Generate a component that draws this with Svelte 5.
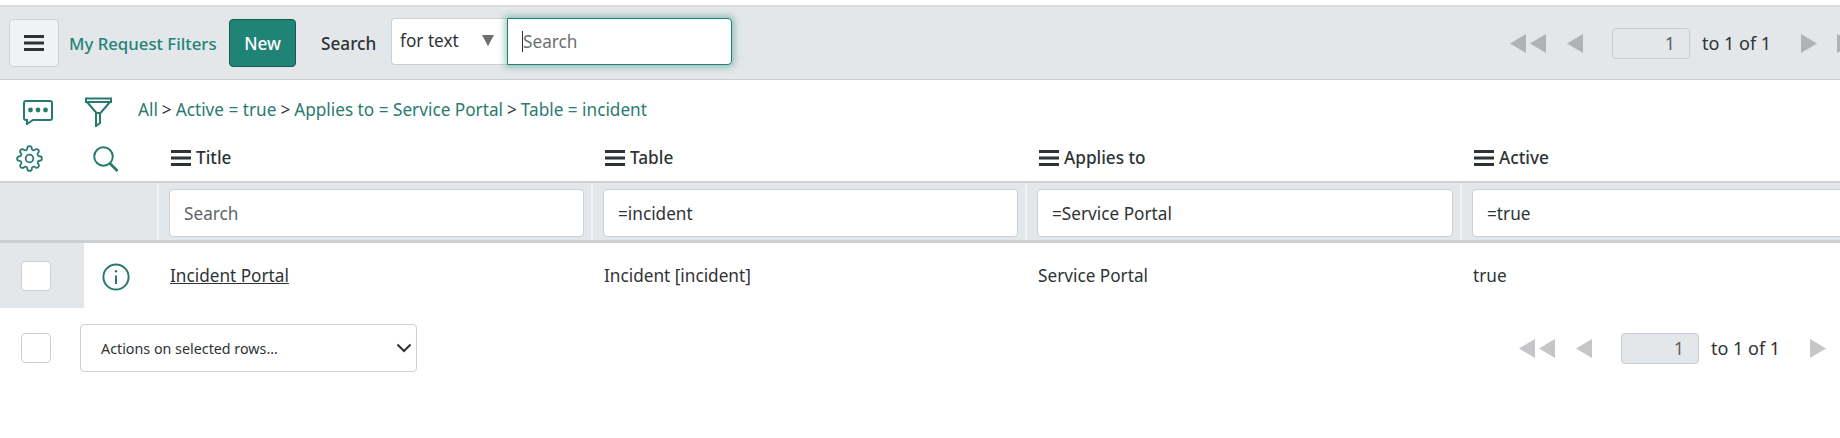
<script>
  const columns = [
    { title: 'Title', filter: '' },
    { title: 'Table', filter: '=incident' },
    { title: 'Applies to', filter: '=Service Portal' },
    { title: 'Active', filter: '=true' }
  ];

  const crumbs = ['All', 'Active = true', 'Applies to = Service Portal', 'Table = incident'];
</script>

{#snippet menuIcon(cls)}
  <svg class={cls} viewBox="0 0 20 16" aria-hidden="true">
    <rect x="0" y="0" width="20" height="3" />
    <rect x="0" y="6.5" width="20" height="3" />
    <rect x="0" y="13" width="20" height="3" />
  </svg>
{/snippet}

{#snippet pager(cls)}
  <div class="pager {cls}">
    <svg class="pg-first" viewBox="0 0 36 19" aria-hidden="true">
      <polygon points="0,9.5 16,0 16,19" />
      <polygon points="20,9.5 36,0 36,19" />
    </svg>
    <svg class="pg-one" viewBox="0 0 16 19" aria-hidden="true">
      <polygon points="0,9.5 16,0 16,19" />
    </svg>
    <div class="pg-input">1</div>
    <span class="pg-text">to 1 of 1</span>
    <svg class="pg-next" viewBox="0 0 16 19" aria-hidden="true">
      <polygon points="16,9.5 0,0 0,19" />
    </svg>
    <svg class="pg-last" viewBox="0 0 36 19" aria-hidden="true">
      <polygon points="20,9.5 0,0 0,19" />
      <polygon points="36,9.5 20,0 20,19" />
    </svg>
  </div>
{/snippet}

<div class="page">
  <header class="toolbar">
    <button class="nav-btn">{@render menuIcon('menu-dark')}</button>
    <span class="list-title">My Request Filters</span>
    <button class="new-btn">New</button>
    <span class="search-label">Search</span>
    <div class="search-group">
      <div class="search-type">
        <span>for text</span>
        <svg viewBox="0 0 12 12" aria-hidden="true"><polygon points="0,1 12,1 6,12" /></svg>
      </div>
      <div class="search-input"><i class="caret"></i><span>Search</span></div>
    </div>
    {@render pager('pager-top')}
  </header>

  <div class="crumb-row">
    <svg class="comment-icon" viewBox="0 0 30 25" aria-hidden="true">
      <path d="M3 1h24a2 2 0 0 1 2 2v15a2 2 0 0 1-2 2H10l-6 4v-4H3a2 2 0 0 1-2-2V3a2 2 0 0 1 2-2z" />
      <circle cx="7.5" cy="10" r="2.4" class="dot" />
      <circle cx="15" cy="10" r="2.4" class="dot" />
      <circle cx="22.5" cy="10" r="2.4" class="dot" />
    </svg>
    <svg class="funnel-icon" viewBox="0 0 27 30" aria-hidden="true">
      <path d="M1 1.5h25v3.5H1zM2 5l9.5 11h4L25 5M11 16v13l4-3V16" />
    </svg>
    <nav class="crumbs">
      {#each crumbs as crumb, i}
        {#if i > 0}<span class="sep">&gt;</span>{/if}
        <span>{crumb}</span>
      {/each}
    </nav>
  </div>

  <div class="table">
    <div class="head-cell icon-cell">
      <svg class="gear-icon" viewBox="0 0 24 24" aria-hidden="true">
        <circle cx="12" cy="12" r="3.4" />
        <path d="M19.4 15a1.65 1.65 0 0 0 .33 1.82l.06.06a2 2 0 0 1 0 2.83 2 2 0 0 1-2.83 0l-.06-.06a1.65 1.65 0 0 0-1.82-.33 1.65 1.65 0 0 0-1 1.51V21a2 2 0 0 1-2 2 2 2 0 0 1-2-2v-.09A1.65 1.65 0 0 0 9 19.4a1.65 1.65 0 0 0-1.82.33l-.06.06a2 2 0 0 1-2.83 0 2 2 0 0 1 0-2.83l.06-.06a1.65 1.65 0 0 0 .33-1.82 1.65 1.65 0 0 0-1.51-1H3a2 2 0 0 1-2-2 2 2 0 0 1 2-2h.09A1.65 1.65 0 0 0 4.6 9a1.65 1.65 0 0 0-.33-1.82l-.06-.06a2 2 0 0 1 0-2.83 2 2 0 0 1 2.83 0l.06.06a1.65 1.65 0 0 0 1.82.33H9a1.65 1.65 0 0 0 1-1.51V3a2 2 0 0 1 2-2 2 2 0 0 1 2 2v.09a1.65 1.65 0 0 0 1 1.51 1.65 1.65 0 0 0 1.82-.33l.06-.06a2 2 0 0 1 2.83 0 2 2 0 0 1 0 2.83l-.06.06a1.65 1.65 0 0 0-.33 1.82V9a1.65 1.65 0 0 0 1.51 1H21a2 2 0 0 1 2 2 2 2 0 0 1-2 2h-.09a1.65 1.65 0 0 0-1.51 1z" />
      </svg>
    </div>
    <div class="head-cell icon-cell">
      <svg class="find-icon" viewBox="0 0 26 26" aria-hidden="true">
        <circle cx="10.5" cy="10.5" r="9.3" />
        <path d="M17 17.5l7.5 7.5" class="handle" />
      </svg>
    </div>
    {#each columns as col}
      <div class="head-cell">
        {@render menuIcon('menu-col')}
        <span class="col-title">{col.title}</span>
      </div>
    {/each}

    <div class="filter-cell filter-blank"></div>
    {#each columns as col}
      <div class="filter-cell">
        <div class="filter-input" class:placeholder={!col.filter}>{col.filter || 'Search'}</div>
      </div>
    {/each}

    <div class="row-check"><span class="checkbox"></span></div>
    <div class="row-cell row-info">
      <svg class="info-icon" viewBox="0 0 28 28" aria-hidden="true">
        <circle cx="14" cy="14" r="12.6" />
        <path d="M14 12.5v8.5" />
        <circle cx="14" cy="8.3" r="1.2" class="dot" />
      </svg>
    </div>
    <div class="row-cell"><a href="#incident" class="row-link">Incident Portal</a></div>
    <div class="row-cell"><span>Incident [incident]</span></div>
    <div class="row-cell"><span>Service Portal</span></div>
    <div class="row-cell"><span>true</span></div>
  </div>

  <footer class="list-footer">
    <span class="checkbox"></span>
    <div class="actions">
      <span>Actions on selected rows...</span>
      <svg viewBox="0 0 16 10" aria-hidden="true"><path d="M1.5 1.5L8 8l6.5-6.5" /></svg>
    </div>
    {@render pager('pager-bottom')}
  </footer>
</div>

<style>
  :global(body) {
    margin: 0;
    background: #fff;
    overflow: hidden;
  }

  .page {
    width: 1900px;
    padding-top: 5px;
    font-family: "Noto Sans", Roboto, sans-serif;
    font-size: 17.2px;
    color: #2e3336;
  }

  svg {
    display: block;
    flex-shrink: 0;
  }

  .toolbar {
    height: 72px;
    display: flex;
    align-items: center;
    background: #e4e7ea;
    border-top: 2px solid #d9dcde;
    border-bottom: 1px solid #cbced0;
    padding-left: 9px;
  }

  .nav-btn {
    width: 50px;
    height: 48px;
    padding: 0;
    display: flex;
    align-items: center;
    justify-content: center;
    background: #f1f2f4;
    border: 1px solid #cdd0d3;
    border-radius: 4px;
  }

  .menu-dark {
    width: 20px;
    height: 16px;
    fill: #2e3336;
  }

  .list-title {
    margin-left: 10px;
    font-size: 16.8px;
    font-weight: 500;
    color: #1f8476;
    width: 160px;
    white-space: nowrap;
  }

  .new-btn {
    width: 67px;
    height: 48px;
    padding: 0;
    font: inherit;
    font-weight: 500;
    color: #fff;
    background: #1f8476;
    border: 1px solid #17594f;
    border-radius: 4px;
  }

  .search-label {
    margin-left: 25px;
    width: 70px;
    font-weight: 500;
  }

  .search-group {
    display: flex;
    height: 47px;
    margin-top: -3px;
  }

  .search-type {
    width: 116px;
    box-sizing: border-box;
    padding: 0 0 3px 8px;
    display: flex;
    align-items: center;
    justify-content: space-between;
    background: #fff;
    border: 1px solid #cdd0d3;
    border-right: 0;
    border-radius: 4px 0 0 4px;
  }

  .search-type svg {
    width: 12px;
    height: 12px;
    margin-right: 13px;
    fill: #6b6f72;
  }

  .search-input {
    width: 225px;
    box-sizing: border-box;
    padding-left: 14px;
    display: flex;
    align-items: center;
    color: #6b7073;
    background: #fff;
    border: 1px solid #1f8476;
    border-radius: 0 4px 4px 0;
    box-shadow: 0 0 7px 2px rgba(31, 132, 118, 0.45);
  }

  .caret {
    width: 1px;
    height: 21px;
    background: #2e3336;
  }

  .pager {
    display: flex;
    align-items: center;
  }

  .pg-first,
  .pg-last {
    width: 36px;
    height: 19px;
  }

  .pg-one,
  .pg-next {
    width: 16px;
    height: 19px;
  }

  .pg-one {
    margin-left: 21px;
  }

  .pg-input {
    width: 78px;
    height: 31px;
    box-sizing: border-box;
    margin-left: 29px;
    padding-right: 14px;
    text-align: right;
    line-height: 29px;
    font-size: 18px;
    color: #5b6266;
    border: 1px solid #c8ccd0;
    border-radius: 4px;
    background: #e4e7ea;
  }

  .pg-text {
    width: 111px;
    padding-left: 12px;
    box-sizing: border-box;
    font-size: 18px;
    white-space: nowrap;
  }

  .pg-last {
    margin-left: 20px;
  }

  .pager-top {
    margin-left: auto;
    padding-right: 27px;
    fill: #b0b3b6;
  }

  .pager-bottom {
    margin-left: auto;
    fill: #c4c6c8;
  }

  .crumb-row {
    height: 44px;
    padding-top: 10px;
    display: flex;
    align-items: center;
    padding-left: 23px;
  }

  .comment-icon {
    width: 30px;
    height: 25px;
    fill: none;
    stroke: #297a6e;
    stroke-width: 2;
  }

  .dot {
    fill: currentColor;
    stroke: none;
  }

  .comment-icon,
  .info-icon {
    color: #297a6e;
  }

  .funnel-icon {
    width: 27px;
    height: 30px;
    margin-left: 32px;
    fill: none;
    stroke: #297a6e;
    stroke-width: 2;
  }

  .crumbs {
    margin-left: 26px;
    margin-top: -6px;
    display: flex;
    gap: 4px;
    color: #2b7a6e;
    white-space: nowrap;
  }

  .sep {
    color: #2e3336;
  }

  .table {
    display: grid;
    grid-template-columns: 84px 73px 434px 434px 435px 440px;
  }

  .head-cell {
    display: flex;
    align-items: center;
    padding-left: 14px;
    border-bottom: 2px solid #cdd0d2;
    height: 47px;
    gap: 5px;
    font-weight: 500;
  }

  .head-cell:nth-child(1) {
    padding-left: 16px;
  }

  .head-cell:nth-child(2) {
    padding-left: 9px;
  }

  .icon-cell svg {
    margin-top: 1px;
  }

  .head-cell:nth-child(2) svg {
    margin-top: 3px;
  }

  .gear-icon {
    width: 27px;
    height: 27px;
    fill: none;
    stroke: #297a6e;
    stroke-width: 1.6;
  }

  .find-icon {
    width: 26px;
    height: 26px;
    fill: none;
    stroke: #297a6e;
    stroke-width: 2;
  }

  .handle {
    stroke-width: 2.6;
  }

  .menu-col {
    width: 20px;
    height: 16px;
    fill: #2e3336;
  }

  .filter-cell {
    background: #e4e7ea;
    height: 57px;
    box-sizing: border-box;
    padding: 6px 7px 3px 10px;
    border-left: 2px solid #f1f2f4;
  }

  .filter-blank {
    grid-column: 1 / span 2;
    border-left: 0;
  }

  .filter-input {
    height: 48px;
    box-sizing: border-box;
    padding-left: 14px;
    display: flex;
    align-items: center;
    background: #fff;
    border: 1px solid #cdd0d3;
    border-radius: 4px;
  }

  .placeholder {
    color: #5f6569;
  }

  .row-check {
    height: 65px;
    display: flex;
    align-items: center;
    padding-left: 21px;
    background: #e4e7ea;
    border-top: 3px solid #cdd0d2;
  }

  .row-cell {
    height: 65px;
    display: flex;
    align-items: center;
    padding-left: 13px;
    border-top: 3px solid #cdd0d2;
    white-space: nowrap;
  }

  .row-info {
    padding-left: 18px;
  }

  .checkbox {
    width: 30px;
    height: 30px;
    box-sizing: border-box;
    flex-shrink: 0;
    background: #fff;
    border: 1px solid #cdd0d3;
    border-radius: 4px;
  }

  .info-icon {
    width: 28px;
    height: 28px;
    margin-top: 3px;
    fill: none;
    stroke: #297a6e;
    stroke-width: 2;
  }

  .row-link {
    color: #2e3336;
    text-decoration: underline;
  }

  .list-footer {
    display: flex;
    align-items: center;
    height: 48px;
    margin-top: 16px;
    padding-left: 21px;
    padding-right: 18px;
  }

  .actions {
    width: 337px;
    height: 48px;
    box-sizing: border-box;
    margin-left: 29px;
    padding: 0 4px 0 20px;
    display: flex;
    align-items: center;
    justify-content: space-between;
    font-size: 14.3px;
    border: 1px solid #cdd0d3;
    border-radius: 4px;
  }

  .actions svg {
    width: 16px;
    height: 10px;
    fill: none;
    stroke: #2e3336;
    stroke-width: 2;
  }
</style>
